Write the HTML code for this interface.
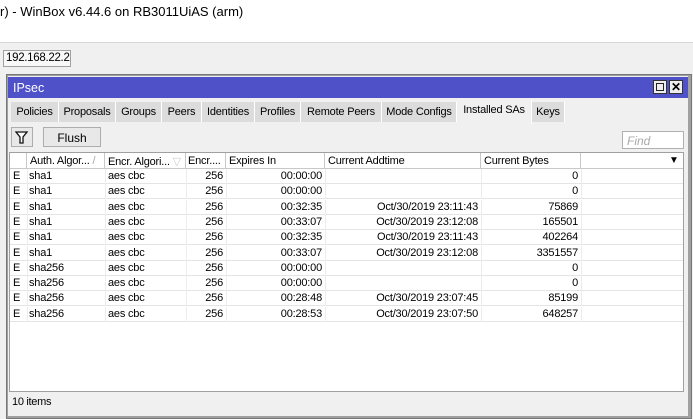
<!DOCTYPE html>
<html><head><style>
*{margin:0;padding:0;box-sizing:border-box}
body{width:693px;height:419px;overflow:hidden;background:#fff;font-family:"Liberation Sans",sans-serif;font-size:11px;color:#000;position:relative}
.a{position:absolute}
.tab{position:absolute;top:102px;height:20px;background:#dcdcdc;border-right:1px solid #fff;padding:4px 0 0;font-size:11px;white-space:nowrap;text-align:center;letter-spacing:-0.2px}
.row{position:absolute;left:10px;width:673px;height:15px;border-bottom:1px solid #e4e4e4}
.c{position:absolute;top:1px;white-space:nowrap;letter-spacing:-0.2px}
.r{text-align:right}
.v{position:absolute;top:0;width:1px;height:15px;background:#ececec}
.h{position:absolute;top:153px;height:16px;border-right:1px solid #c8c8c8;padding:2px 3px;white-space:nowrap;font-size:11px;letter-spacing:-0.2px}
</style></head><body>
<div class="a" style="left:0;top:4px;font-size:13px">r) - WinBox v6.44.6 on RB3011UiAS (arm)</div>
<div class="a" style="left:0;top:42px;width:693px;height:377px;background:#f0f0f0;border-top:1px solid #d8d8d8"></div>
<div class="a" style="left:3px;top:50px;width:68px;height:17px;border:1px solid #a0a0a0;background:#f8f8f8;font-size:11.5px;padding:1px 0 0 2px;letter-spacing:-0.3px">192.168.22.2</div>
<div class="a" style="left:6px;top:74px;width:686px;height:345px;background:#a0a0a0;border:1px solid #777"></div>
<div class="a" style="left:8px;top:76px;width:680px;height:340px;background:#f0f0f0"></div>
<div class="a" style="left:8px;top:77px;width:680px;height:21px;background:#4f51c9;color:#fff;font-size:12.5px;padding:4px 0 0 5px">IPsec</div>
<div class="a" style="left:653px;top:80px;width:14px;height:14px;background:#eee;border:1px solid #333"><div class="a" style="left:2px;top:2px;width:8px;height:8px;border:1.5px solid #222"></div></div>
<div class="a" style="left:669px;top:80px;width:14px;height:14px;background:#eee;border:1px solid #333;font-size:12px;font-weight:bold;text-align:center;line-height:12px">✕</div>
<div class="tab" style="left:11px;width:48px">Policies</div>
<div class="tab" style="left:59px;width:57px">Proposals</div>
<div class="tab" style="left:116px;width:46px">Groups</div>
<div class="tab" style="left:162px;width:40px">Peers</div>
<div class="tab" style="left:202px;width:53px">Identities</div>
<div class="tab" style="left:255px;width:46px">Profiles</div>
<div class="tab" style="left:301px;width:81px">Remote Peers</div>
<div class="tab" style="left:382px;width:75px">Mode Configs</div>
<div class="tab" style="left:457px;top:100px;height:24px;width:75px;background:#f0f0f0;padding-top:4px">Installed SAs</div>
<div class="tab" style="left:532px;width:33px">Keys</div>
<div class="a" style="left:11px;top:127px;width:22px;height:20px;border:1px solid #adadad;background:#e8e8e8"><svg width="20" height="18" viewBox="0 0 20 18"><path d="M4 4H15L11 9V15H8V9Z" fill="#fff" stroke="#111" stroke-width="1.3"/></svg></div>
<div class="a" style="left:43px;top:127px;width:58px;height:20px;border:1px solid #adadad;background:#e8e8e8;text-align:center;padding-top:3px;font-size:12px">Flush</div>
<div class="a" style="left:622px;top:131px;width:62px;height:18px;border:1px solid #b0b0b0;background:#fff;color:#aaa;font-style:italic;padding:2px 4px;font-size:12px">Find</div>
<div class="a" style="left:9px;top:152px;width:675px;height:240px;background:#fff;border:1px solid #a0a0a0"></div>
<div class="a" style="left:10px;top:153px;width:673px;height:16px;background:#fff;border-bottom:1px solid #c8c8c8"></div>
<div class="h" style="left:10px;width:17px"></div>
<div class="h" style="left:27px;width:78px">Auth. Algor... <span style="color:#aaa">/</span></div>
<div class="h" style="left:105px;width:81px">Encr. Algori... <span style="color:#ccc">▽</span></div>
<div class="h" style="left:186px;width:40px;padding-left:2px">Encr....</div>
<div class="h" style="left:226px;width:99px">Expires In</div>
<div class="h" style="left:325px;width:156px">Current Addtime</div>
<div class="h" style="left:481px;width:100px">Current Bytes</div>
<div class="a" style="left:669px;top:155px;font-size:10px">▼</div>
<div id="rows"></div>
<div class="a" style="left:12px;top:396px;font-size:11px;letter-spacing:-0.3px">10 items</div>
<script>
var d=[["sha1","00:00:00","","0"],["sha1","00:00:00","","0"],["sha1","00:32:35","Oct/30/2019 23:11:43","75869"],["sha1","00:33:07","Oct/30/2019 23:12:08","165501"],["sha1","00:32:35","Oct/30/2019 23:11:43","402264"],["sha1","00:33:07","Oct/30/2019 23:12:08","3351557"],["sha256","00:00:00","","0"],["sha256","00:00:00","","0"],["sha256","00:28:48","Oct/30/2019 23:07:45","85199"],["sha256","00:28:53","Oct/30/2019 23:07:50","648257"]];
var h="";d.forEach(function(r,i){h+='<div class="row" style="top:'+(169+i*15.3)+'px">'+
'<span class="c" style="left:3px">E</span><span class="c" style="left:19px">'+r[0]+'</span><span class="c" style="left:98px">aes cbc</span>'+
'<span class="c r" style="left:176px;width:37px">256</span><span class="c r" style="left:216px;width:96px">'+r[1]+'</span>'+
'<span class="c r" style="left:315px;width:153px">'+r[2]+'</span><span class="c r" style="left:471px;width:97px">'+r[3]+'</span>'+
[17,95,176,216,315,471,571].map(function(x){return '<span class="v" style="left:'+x+'px"></span>'}).join('')+'</div>';});
document.getElementById("rows").innerHTML=h;
</script>
</body></html>
